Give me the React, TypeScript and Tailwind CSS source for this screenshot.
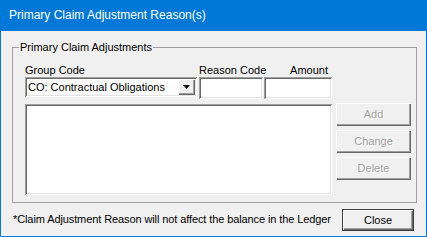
const sunken =
  "bg-white shadow-[inset_1px_1px_0_#a0a0a0,inset_-1px_-1px_0_#ffffff,inset_2px_2px_0_#696969,inset_-2px_-2px_0_#e3e3e3]";
const raised =
  "bg-[#f0f0f0] shadow-[inset_1px_1px_0_#ffffff,inset_-1px_-1px_0_#696969,inset_-2px_-2px_0_#a0a0a0]";

function SideButton({ label }: { label: string }) {
  return (
    <button
      disabled
      className={`h-[23px] w-[75px] text-[11px] text-[#a0a0a0] [text-shadow:1px_1px_0_#ffffff] ${raised}`}
    >
      {label}
    </button>
  );
}

function App() {
  return (
    <div
      className="flex h-[237px] w-[427px] flex-col bg-[#0078d7] text-[11px] leading-[13px] text-black"
      style={{ fontFamily: '"Liberation Sans", Arial, sans-serif' }}
    >
      <div className="flex h-[31px] shrink-0 items-center px-[9px] text-[12px] text-white">
        Primary Claim Adjustment Reason(s)
      </div>

      <div className="mx-px mb-px flex flex-1 flex-col bg-[#f0f0f0]">
        <fieldset className="mt-[10px] ml-[11px] mr-[9px] h-[162px] border border-[#a0a0a0] p-0">
          <legend className="ml-[6px] px-px">Primary Claim Adjustments</legend>

          <div className="mt-[10px] ml-[12px] flex whitespace-nowrap">
            <div className="flex w-[172px] flex-col">
              <span>Group Code</span>
              <div className={`flex h-[20px] items-center justify-between pr-[2px] pl-[3px] ${sunken}`}>
                <span>CO: Contractual Obligations</span>
                <span className={`flex h-[16px] w-[17px] items-center justify-center ${raised}`}>
                  <svg width="7" height="4" viewBox="0 0 7 4">
                    <path d="M0 0h7L3.5 4z" fill="#000" />
                  </svg>
                </span>
              </div>
            </div>
            <div className="ml-[2px] flex w-[64px] flex-col">
              <span>Reason Code</span>
              <div className={`h-[22px] ${sunken}`} />
            </div>
            <div className="ml-px flex w-[68px] flex-col">
              <span className="pr-[4px] text-right">Amount</span>
              <div className={`h-[22px] ${sunken}`} />
            </div>
          </div>

          <div className="mt-[4px] ml-[12px] flex">
            <div className={`mt-px h-[91px] w-[307px] ${sunken}`} />
            <div className="ml-[4px] flex flex-col gap-[4px]">
              <SideButton label="Add" />
              <SideButton label="Change" />
              <SideButton label="Delete" />
            </div>
          </div>
        </fieldset>

        <div className="mt-[6px] ml-[12px] mr-[12px] flex items-start justify-between">
          <span className="mt-[4px] whitespace-nowrap tracking-[-0.1px]">
            *Claim Adjustment Reason will not affect the balance in the Ledger
          </span>
          <button className="h-[22px] w-[72px] border border-[#3c3c3c] bg-[#f0f0f0] text-[11px] shadow-[inset_1px_1px_0_#ffffff,inset_-1px_-1px_0_#696969,inset_-2px_-2px_0_#a0a0a0]">
            Close
          </button>
        </div>
      </div>
    </div>
  );
}

export default App;
